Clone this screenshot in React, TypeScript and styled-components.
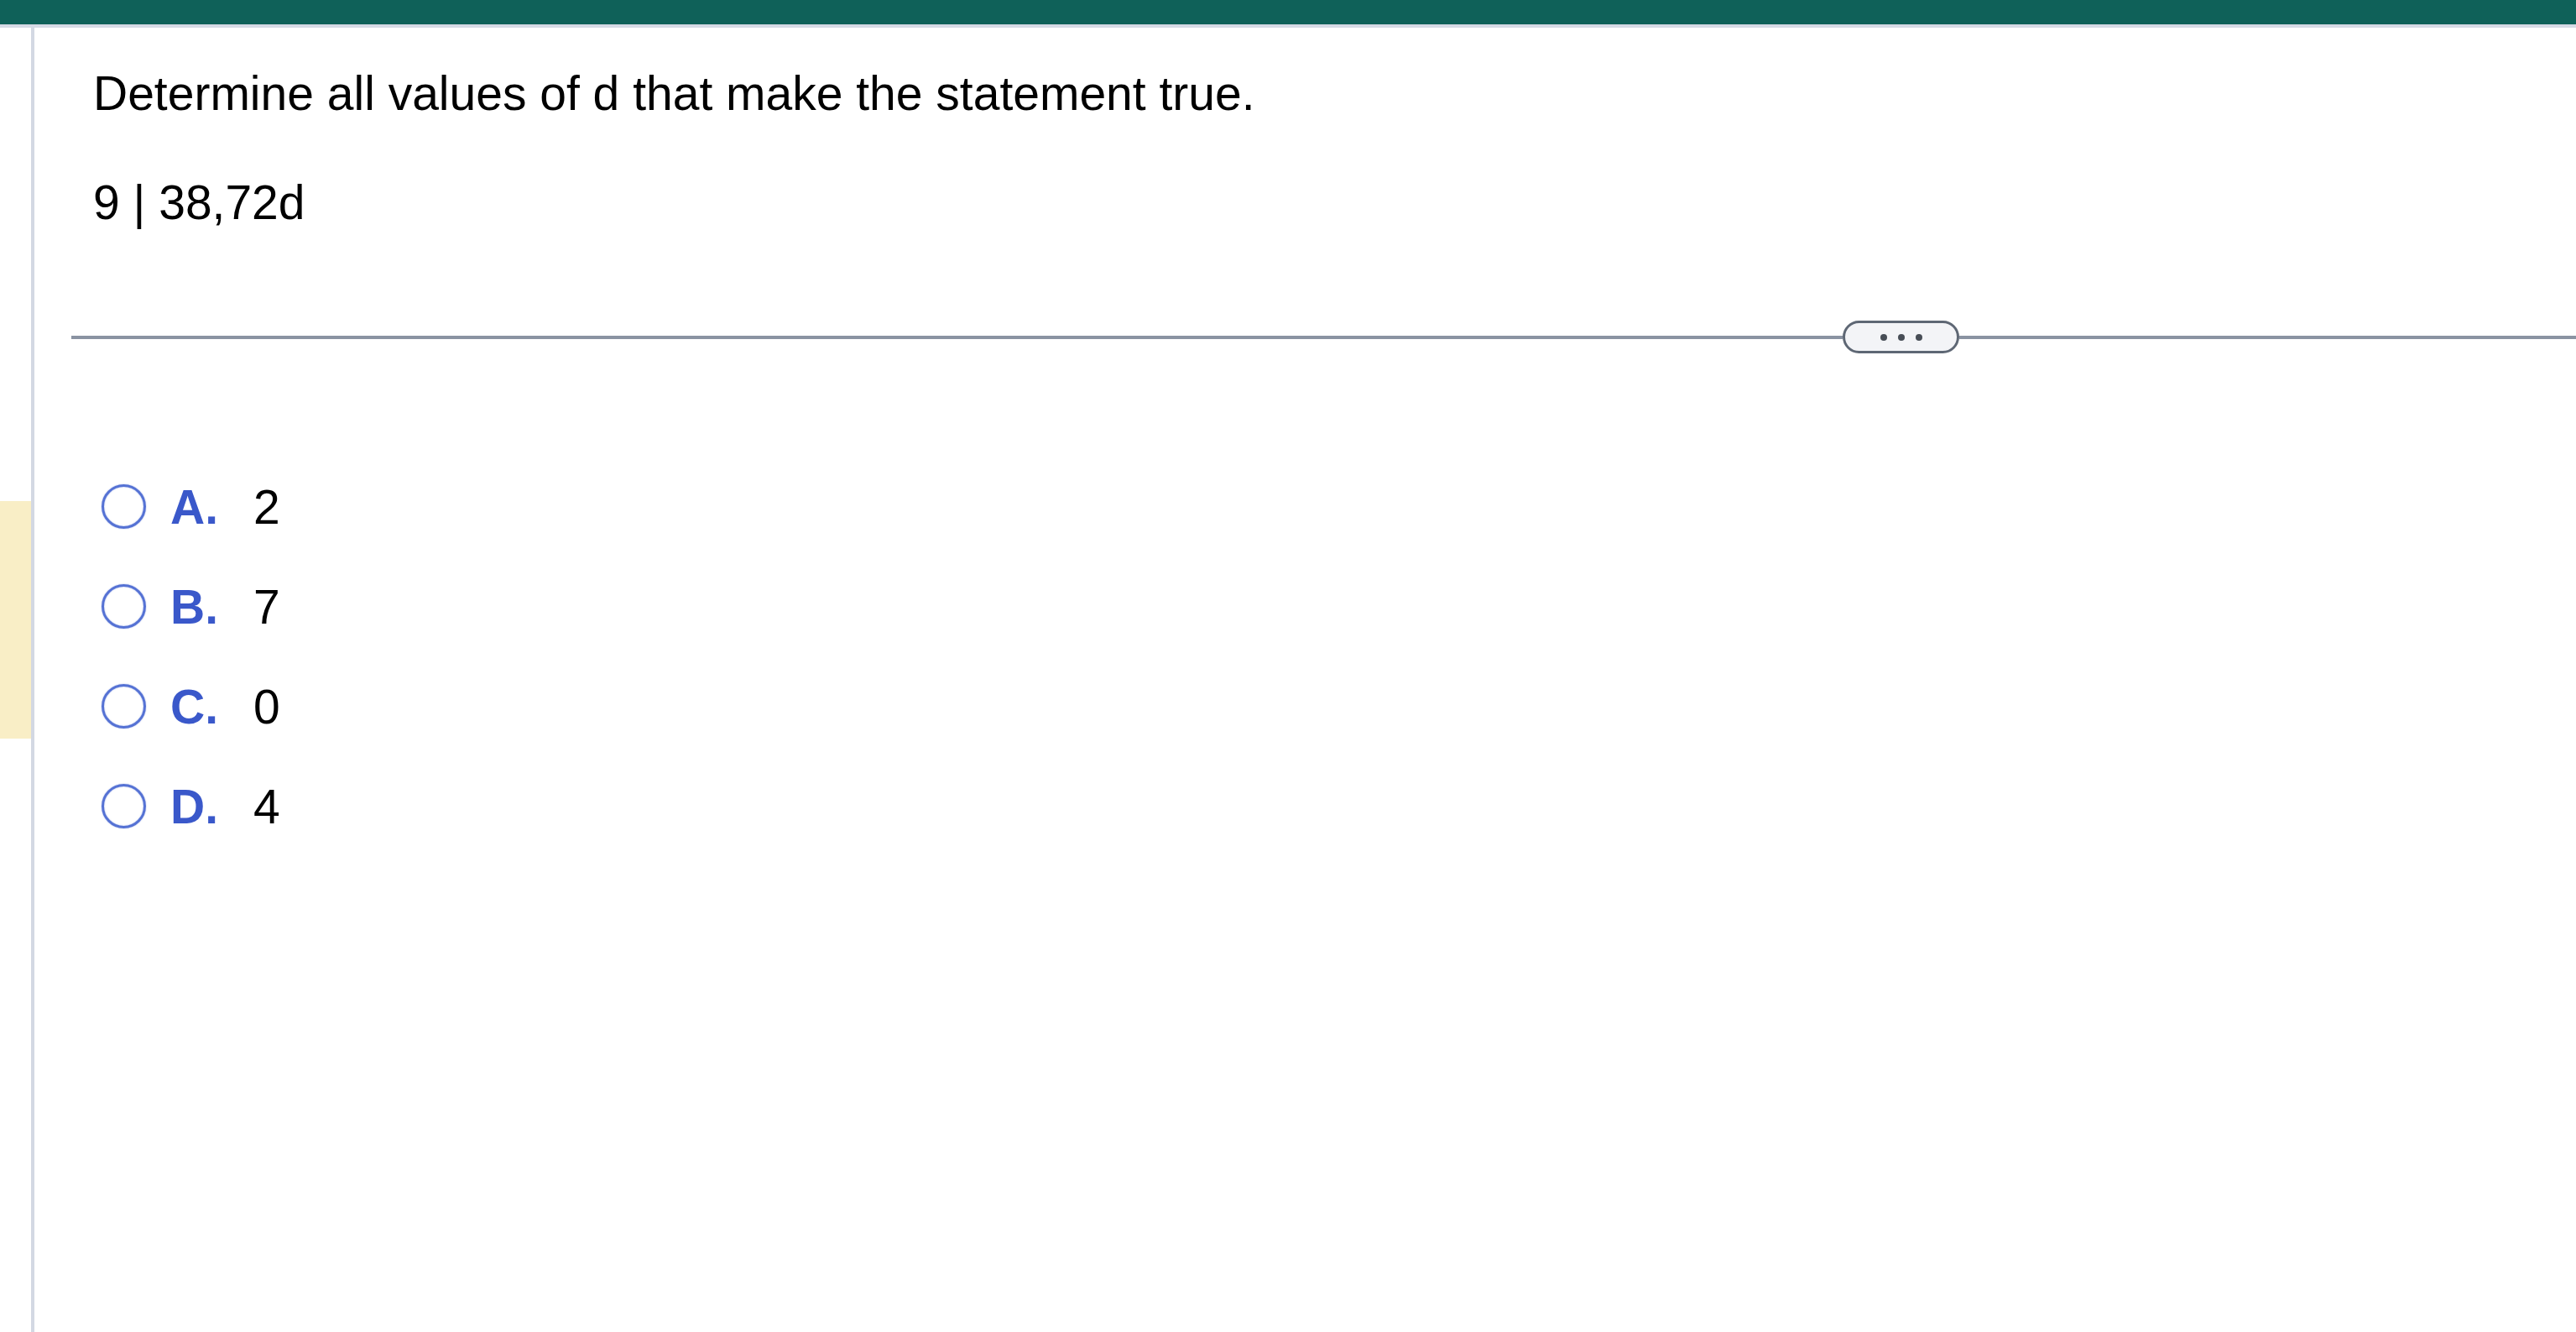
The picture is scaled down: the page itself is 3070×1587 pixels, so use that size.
import React from "react";
import styled, { createGlobalStyle } from "styled-components";

const GlobalStyle = createGlobalStyle`
  html, body {
    margin: 0;
    padding: 0;
    background: #ffffff;
  }
  body {
    font-family: "Liberation Sans", Arial, Helvetica, sans-serif;
    color: #000;
  }
  * { box-sizing: border-box; }
`;

const Page = styled.div`
  display: flex;
  flex-direction: column;
  min-height: 100vh;
`;

const TopBar = styled.header`
  height: 33px;
  background: #0f6159;
  border-bottom: 4px solid #d5dae5;
  flex: 0 0 auto;
`;

const Body = styled.div`
  flex: 1 1 auto;
  display: flex;
`;

const Gutter = styled.aside`
  flex: 0 0 37px;
  display: flex;
  flex-direction: column;
`;

const Highlight = styled.div`
  margin-top: 564px;
  height: 283px;
  background: #f9eec6;
`;

const Content = styled.main`
  flex: 1 1 auto;
  border-left: 4px solid #d3d8e3;
  padding: 44px 0 0 70px;
  display: flex;
  flex-direction: column;
`;

const Text = styled.p<{ $gap?: number }>`
  margin: ${(p) => p.$gap ?? 0}px 0 0 0;
  font-size: 57px;
  line-height: 68px;
  color: #000;
`;

const Divider = styled.div`
  margin: 107px 0 0 -26px;
  display: grid;
  grid-template-columns: 2111px 139px 1fr;
  align-items: center;
`;

const Rule = styled.div`
  height: 4px;
  background: #8a93a2;
`;

const MoreButton = styled.button`
  height: 39px;
  border: 3px solid #5e6774;
  border-radius: 20px;
  background: #f3f4f7;
  display: flex;
  align-items: center;
  justify-content: center;
  gap: 13px;
  padding: 0;
  cursor: pointer;
`;

const Dot = styled.span`
  width: 8px;
  height: 8px;
  border-radius: 50%;
  background: #474d56;
`;

const Options = styled.ul`
  list-style: none;
  margin: 123px 0 0 0;
  padding: 0;
  display: flex;
  flex-direction: column;
`;

const OptionRow = styled.li`
  height: 119px;
  display: flex;
  align-items: center;
`;

const Radio = styled.span`
  width: 53px;
  height: 53px;
  margin-left: 10px;
  border-radius: 50%;
  border: 3.5px solid #5572d4;
  box-shadow: 0 0 1.5px rgba(70, 100, 210, 0.6), inset 0 0 1.5px rgba(70, 100, 210, 0.6);
  flex: 0 0 auto;
`;

const Label = styled.span`
  margin-left: 29px;
  width: 99px;
  font-size: 57px;
  line-height: 68px;
  font-weight: bold;
  color: #3a58ca;
`;

const Value = styled.span`
  font-size: 57px;
  line-height: 68px;
  color: #000;
`;

const options = [
  { label: "A.", value: "2" },
  { label: "B.", value: "7" },
  { label: "C.", value: "0" },
  { label: "D.", value: "4" },
];

export default function App() {
  return (
    <>
      <GlobalStyle />
      <Page>
        <TopBar />
        <Body>
          <Gutter>
            <Highlight />
          </Gutter>
          <Content>
            <Text>Determine all values of d that make the statement true.</Text>
            <Text $gap={62}>9 | 38,72d</Text>
            <Divider>
              <Rule />
              <MoreButton aria-label="More">
                <Dot />
                <Dot />
                <Dot />
              </MoreButton>
              <Rule />
            </Divider>
            <Options>
              {options.map((o) => (
                <OptionRow key={o.label}>
                  <Radio />
                  <Label>{o.label}</Label>
                  <Value>{o.value}</Value>
                </OptionRow>
              ))}
            </Options>
          </Content>
        </Body>
      </Page>
    </>
  );
}
